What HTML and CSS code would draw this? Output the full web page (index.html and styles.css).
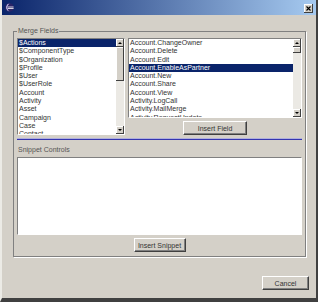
FILE: index.html
```html
<!DOCTYPE html>
<html lang="en">
<head>
    <meta charset="UTF-8">
    <meta name="viewport" content="width=device-width, initial-scale=1.0">
    <title>Merge Fields</title>
    <link rel="stylesheet" href="styles.css">
</head>
<body>
    <div class="window">
        <div class="titlebar">
            <svg class="app-icon" width="9" height="9" viewBox="0 0 9 9">
                <circle cx="4.5" cy="4.5" r="4.3" fill="#2b2568"/>
                <path d="M1.2 3.4 A4 4 0 0 1 4.5 0.6 A4.6 4.6 0 0 0 2.4 4.5 A4.6 4.6 0 0 0 4.5 8.4 A4 4 0 0 1 1.2 5.6 Z" fill="#c9c4ec"/>
                <rect x="3" y="3.6" width="5.6" height="0.8" fill="#fff"/>
                <rect x="3" y="5.2" width="5.6" height="0.8" fill="#fff"/>
            </svg>
            <span class="close-btn">
                <svg width="5" height="5" viewBox="0 0 5 5">
                    <path d="M0.5 0.5 L4.5 4.5 M4.5 0.5 L0.5 4.5" stroke="#000" stroke-width="1.1"/>
                </svg>
            </span>
        </div>

        <div class="content">
            <fieldset class="group">
                <legend>Merge Fields</legend>

                <div class="fields-row">
                    <div class="listbox list-objects">
                        <div class="items">
                            <div class="item selected">$Actions</div>
                            <div class="item">$ComponentType</div>
                            <div class="item">$Organization</div>
                            <div class="item">$Profile</div>
                            <div class="item">$User</div>
                            <div class="item">$UserRole</div>
                            <div class="item">Account</div>
                            <div class="item">Activity</div>
                            <div class="item">Asset</div>
                            <div class="item">Campaign</div>
                            <div class="item">Case</div>
                            <div class="item">Contact</div>
                        </div>
                        <div class="scrollbar">
                            <span class="arrow up"></span>
                            <span class="thumb thumb-objects"></span>
                            <span class="track"></span>
                            <span class="arrow down"></span>
                        </div>
                    </div>

                    <div class="fields-col">
                        <div class="listbox list-fields">
                            <div class="items">
                                <div class="item">Account.ChangeOwner</div>
                                <div class="item">Account.Delete</div>
                                <div class="item">Account.Edit</div>
                                <div class="item selected">Account.EnableAsPartner</div>
                                <div class="item">Account.New</div>
                                <div class="item">Account.Share</div>
                                <div class="item">Account.View</div>
                                <div class="item">Activity.LogCall</div>
                                <div class="item">Activity.MailMerge</div>
                                <div class="item">Activity.RequestUpdate</div>
                            </div>
                            <div class="scrollbar">
                                <span class="arrow up"></span>
                                <span class="thumb thumb-fields"></span>
                                <span class="track"></span>
                                <span class="arrow down"></span>
                            </div>
                        </div>
                        <button class="btn btn-field">Insert Field</button>
                    </div>
                </div>

                <div class="divider"></div>

                <div class="section-label">Snippet Controls</div>
                <div class="snippet-box"></div>
                <button class="btn btn-snippet">Insert Snippet</button>
            </fieldset>

            <div class="footer">
                <button class="btn btn-cancel">Cancel</button>
            </div>
        </div>
    </div>
</body>
</html>
```

FILE: styles.css
```css
body { margin: 0; background: #fff; font-family: "Liberation Sans", Arial, sans-serif; font-size: 7px; color: #333; }

.window { width: 318px; height: 302px; box-sizing: border-box; background: #d4d0c8; border-left: 2px solid #ecebe6; border-right: 2px solid #404040; border-bottom: 4px solid #404040; }

.titlebar { height: 15px; box-sizing: border-box; padding: 3px 3px 0 3px; display: flex; justify-content: space-between; align-items: flex-start; background: linear-gradient(to right, #0a246a, #a6caf0); }
.app-icon { display: block; }
.close-btn { width: 9px; height: 9px; margin-top: 1px; display: flex; align-items: center; justify-content: center; background: #d4d0c8; box-shadow: inset -1px -1px #404040, inset 1px 1px #fff; }
.close-btn svg { display: block; }

.content { padding: 11px 7px 0 11px; }

.group { margin: 0 3px 0 0; padding: 2px 3px 4px 3px; border: 1px solid #808080; box-shadow: 1px 1px #fff; min-width: 0; }
.group legend { padding: 0 1px; line-height: 10px; color: #555; }

.fields-row { display: flex; gap: 3px; }
.fields-col { width: 174px; display: flex; flex-direction: column; align-items: center; }

.listbox { box-sizing: border-box; display: flex; background: #fff; border: 1px solid; border-color: #808080 #fff #fff #808080; overflow: hidden; }
.list-objects { width: 108px; height: 97px; }
.list-fields { width: 174px; height: 80px; }

.items { flex: 1; overflow: hidden; }
.item { height: 8.3px; line-height: 8.3px; padding-left: 1px; white-space: nowrap; }
.item.selected { background: #0a246a; color: #fff; }

.scrollbar { width: 8px; display: flex; flex-direction: column; background: #ebe9e4; }
.arrow, .thumb { display: flex; align-items: center; justify-content: center; background: #d4d0c8; box-shadow: inset -1px -1px #404040, inset 1px 1px #fff; }
.arrow { height: 8px; }
.arrow::after { content: ""; border-left: 2px solid transparent; border-right: 2px solid transparent; }
.arrow.up::after { border-bottom: 2px solid #000; }
.arrow.down::after { border-top: 2px solid #000; }
.thumb-objects { height: 34px; }
.thumb-fields { height: 6px; }
.track { flex: 1; }

.btn { font: inherit; color: #333; background: #d4d0c8; height: 14px; padding: 0; box-sizing: border-box; border: 1px solid; border-color: #fff #404040 #404040 #fff; box-shadow: inset -1px -1px #808080; }
.btn-field { width: 64px; margin-top: 3px; }

.divider { margin-top: 3px; height: 1px; background: #3434b0; border-top: 1px solid #b0b0dc; }

.section-label { margin-top: 5px; padding-left: 1px; line-height: 10px; color: #555; }
.snippet-box { margin-top: 2px; height: 78px; box-sizing: border-box; background: #fff; border: 1px solid; border-color: #808080 #fff #fff #808080; }
.btn-snippet { display: block; width: 52px; margin: 3px auto 0; }

.footer { display: flex; justify-content: flex-end; margin-top: 19px; }
.btn-cancel { width: 47px; }
```
